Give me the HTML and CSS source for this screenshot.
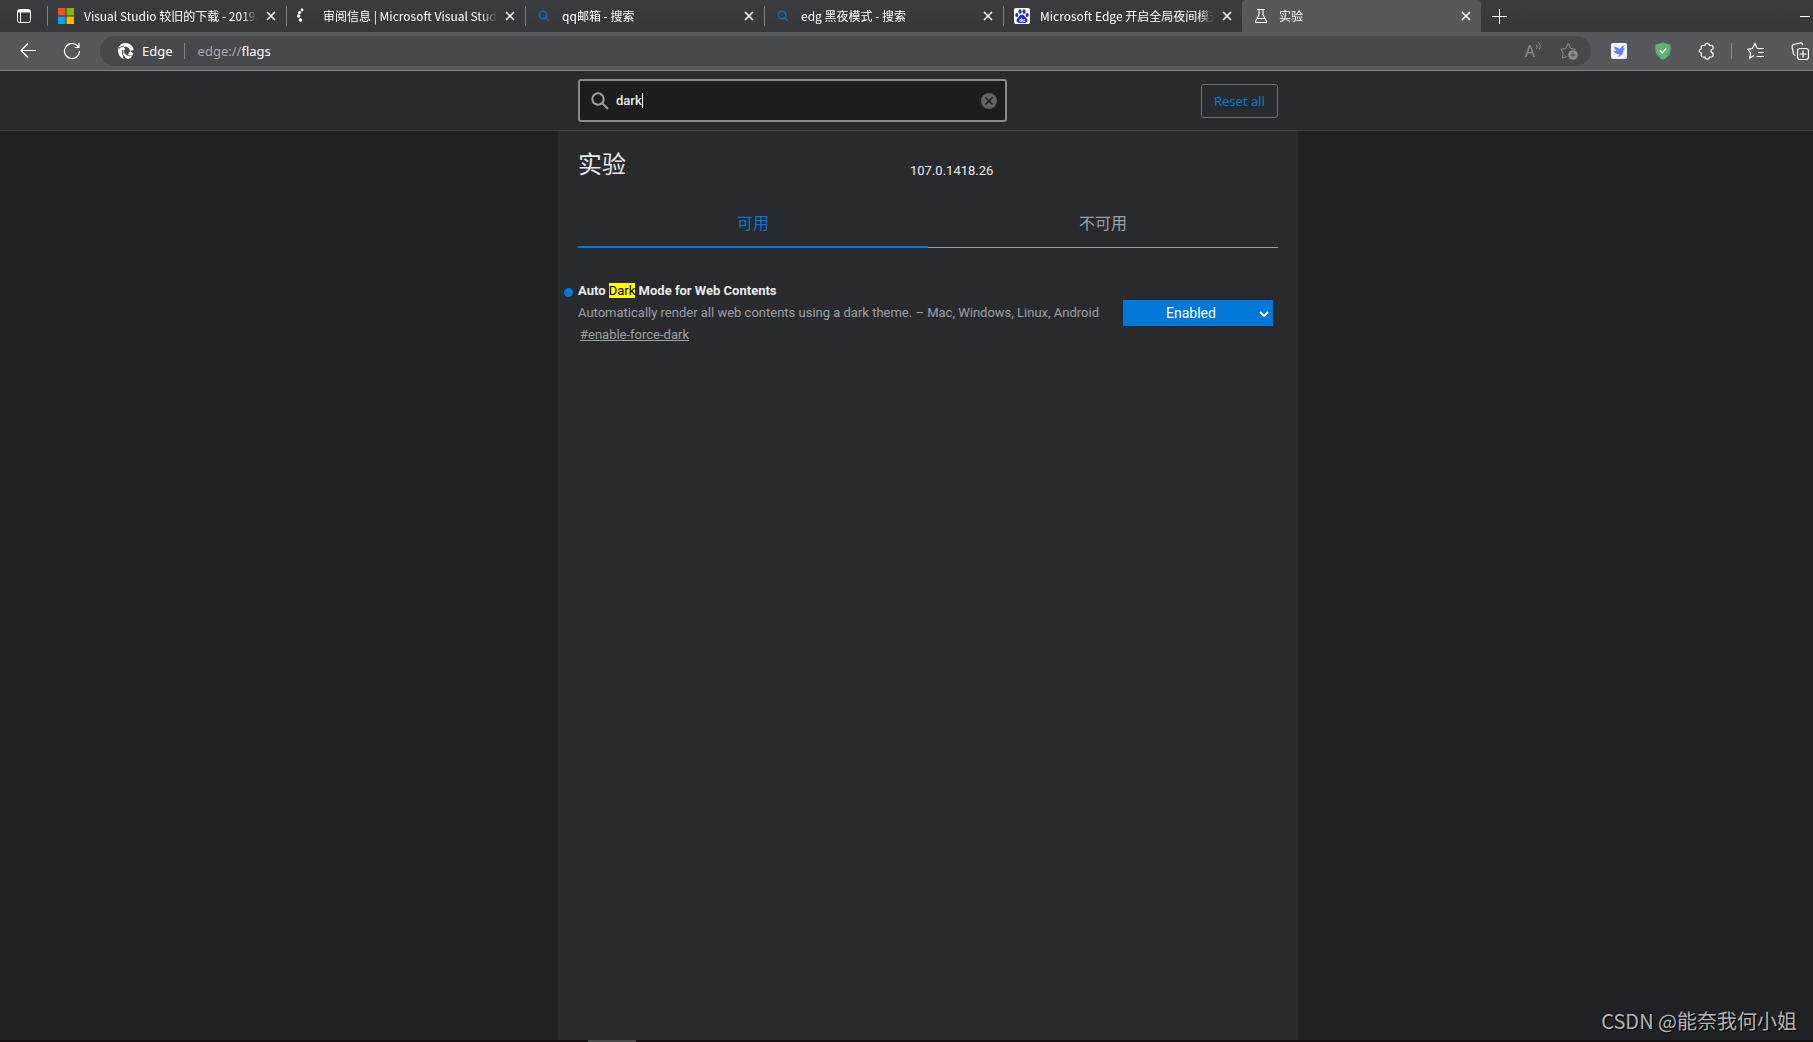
FILE: index.html
```html
<!DOCTYPE html>
<html lang="zh-CN">
<head>
<meta charset="utf-8">
<title>实验</title>
<link rel="stylesheet" href="styles.css">
</head>
<body>
<header class="browser">
  <nav class="tabstrip" aria-label="Tabs">
    <button class="tab-actions" aria-label="Tab actions">
      <svg width="14" height="14" viewBox="0 0 14 14" fill="none" stroke="#fff"><rect x=".5" y=".5" width="13" height="13" rx="2"/><path d="M1 1h12v2.500H1z" fill="#fff" stroke="none"/><path d="M3.500 3v10"/></svg>
    </button>
    <div class="tab">
      <svg class="favicon" width="16" height="16" viewBox="0 0 16 16"><path fill="#f25022" d="M0 0h7.500v7.500H0z"/><path fill="#7fba00" d="M8.500 0H16v7.500H8.500z"/><path fill="#00a4ef" d="M0 8.500h7.500V16H0z"/><path fill="#ffb900" d="M8.500 8.500H16V16H8.500z"/></svg>
      <a class="tab-title" href="#">Visual Studio 较旧的下载 - 2019、</a>
      <button class="close" aria-label="Close tab"><svg width="10" height="10" viewBox="0 0 10 10"><path d="M1 1l8 8M9 1l-8 8"/></svg></button>
    </div>
    <div class="tab">
      <svg class="favicon" width="16" height="16" viewBox="0 0 16 16" fill="#fff"><circle cx="5" cy="2" r="1.400"/><circle cx="2.500" cy="4.500" r="1.600"/><circle cx="1.700" cy="8" r="1.700"/><circle cx="3.500" cy="12" r="1.800"/></svg>
      <a class="tab-title" href="#">审阅信息 | Microsoft Visual Studio</a>
      <button class="close" aria-label="Close tab"><svg width="10" height="10" viewBox="0 0 10 10"><path d="M1 1l8 8M9 1l-8 8"/></svg></button>
    </div>
    <div class="tab">
      <svg class="favicon" width="16" height="16" viewBox="0 0 16 16" fill="none" stroke="#0f6cbd" stroke-width="1.600"><circle cx="7" cy="7" r="3.700"/><path d="M9.800 9.800L13 13"/></svg>
      <a class="tab-title" href="#">qq邮箱 - 搜索</a>
      <button class="close" aria-label="Close tab"><svg width="10" height="10" viewBox="0 0 10 10"><path d="M1 1l8 8M9 1l-8 8"/></svg></button>
    </div>
    <div class="tab">
      <svg class="favicon" width="16" height="16" viewBox="0 0 16 16" fill="none" stroke="#0f6cbd" stroke-width="1.600"><circle cx="7" cy="7" r="3.700"/><path d="M9.800 9.800L13 13"/></svg>
      <a class="tab-title" href="#">edg 黑夜模式 - 搜索</a>
      <button class="close" aria-label="Close tab"><svg width="10" height="10" viewBox="0 0 10 10"><path d="M1 1l8 8M9 1l-8 8"/></svg></button>
    </div>
    <div class="tab">
      <svg class="favicon" width="16" height="16" viewBox="0 0 16 16"><rect width="16" height="16" rx="2" fill="#fff"/><g fill="#2529d8"><ellipse cx="2.800" cy="7" rx="1.600" ry="2.100"/><ellipse cx="6" cy="3.500" rx="1.600" ry="2.200"/><ellipse cx="10" cy="3.500" rx="1.600" ry="2.200"/><ellipse cx="13.200" cy="7" rx="1.600" ry="2.100"/><path d="M8 6.500c2.200 0 2.600 2.300 4.400 3.700 2 1.700.9 4.800-1.600 4.800H5.200c-2.500 0-3.600-3.100-1.600-4.800C5.400 8.800 5.800 6.500 8 6.500z"/></g><text x="8" y="13.500" font-family="Roboto, sans-serif" font-size="5" font-weight="700" text-anchor="middle" fill="#fff">du</text></svg>
      <a class="tab-title" href="#">Microsoft Edge 开启全局夜间模式</a>
      <button class="close" aria-label="Close tab"><svg width="10" height="10" viewBox="0 0 10 10"><path d="M1 1l8 8M9 1l-8 8"/></svg></button>
    </div>
    <div class="tab active">
      <svg class="favicon" width="16" height="16" viewBox="0 0 16 16" fill="none" stroke="#fff" stroke-width="1.100"><path d="M4 1.500h8M6 1.500v5L2.600 13.300q-.5 1.200.8 1.200h9.200q1.300 0 .8-1.200L10 6.500v-5M4.300 10.500h7.400"/></svg>
      <a class="tab-title" href="#" aria-current="page">实验</a>
      <button class="close" aria-label="Close tab"><svg width="10" height="10" viewBox="0 0 10 10"><path d="M1 1l8 8M9 1l-8 8"/></svg></button>
    </div>
    <button class="new-tab" aria-label="New tab"><svg width="15" height="15" viewBox="0 0 15 15" stroke="#fff"><path d="M7.500 0v15M0 7.500h15"/></svg></button>
    <button class="minimize" aria-label="Minimize"><svg width="10" height="10" viewBox="0 0 10 10" stroke="#fff"><path d="M0 5.500h10"/></svg></button>
  </nav>
  <div class="toolbar">
    <button class="tool" aria-label="Back"><svg width="18" height="18" viewBox="0 0 18 18"><path d="M17 8.500H2M9 1.500l-7 7 7 7"/></svg></button>
    <button class="tool" aria-label="Refresh"><svg width="18" height="18" viewBox="0 0 18 18"><path d="M16.500 9a7.500 7.500 0 1 1-2.400-5.500L16 5.500M16 1v4.500h-4.500"/></svg></button>
    <div class="address">
      <svg width="18" height="18" viewBox="0 0 18 18"><g fill="none" stroke="#fff" stroke-width="3.800"><path d="M3.500 6A6 6 0 0 1 14.700 8.500"/><path d="M15 10.500a3 3 0 0 1-3.300 1"/><path d="M7 5.500a6 6 0 0 0-.5 9"/></g><path fill="#fff" d="M1.200 5.500Q.2 9.500 2 13q2 3.300 5.500 4.200Q3.500 14 3.800 10q.2-2 1.700-3.500z"/><path fill="#fff" d="M7.500 9.500q.3 4 4.500 4.600 2 .2 4-1-1.800 3.300-5 3.900-3-.5-4-3.500z"/><path d="M1.500 7Q3.500 4 7 4.200M5.800 8Q4 12 8 16" fill="none" stroke="#47484b"/></svg>
      <span class="brand">Edge</span>
      <a class="url" href="#"><span class="scheme">edge://</span>flags</a>
      <button class="read" aria-label="Read aloud">A<svg width="7" height="10" viewBox="0 0 7 10"><path d="M1 3.500q2 2 .5 4.500M3 1q4 3.500 1 7.500"/></svg></button>
      <button class="favorite" aria-label="Add to favorites"><svg width="18" height="18" viewBox="0 0 18 18"><path d="M6.500 14.500l-4 1.500.6-5L.8 7.300l4.900-.8L8.300 1.200l2.500 5.300 5 .8"/><circle cx="13" cy="13" r="4.800" class="plus-disc"/><path d="M13 10.500v5M10.500 13h5" class="plus-mark"/></svg></button>
    </div>
    <button class="tool" aria-label="Bird extension"><svg width="16" height="16" viewBox="0 0 16 16"><defs><linearGradient id="wing" x1="0" y1="0" x2="1" y2="1"><stop offset="0" stop-color="#28a8f5"/><stop offset="1" stop-color="#9a5cf6"/></linearGradient></defs><rect width="16" height="16" rx="2" fill="#f3f1ff" stroke="none"/><path d="M3 3.500q3 .2 5.500 2.500Q10 3 13.800 2q-1.600 1.700-1.500 3.300l2 .8-1.800.8q.3 4.300-5.500 7.300l1.600-2.800Q4.300 11 2.500 7.800l2.700.3Q3.300 6 3 3.500z" fill="url(#wing)" stroke="none"/></svg></button>
    <button class="tool" aria-label="Shield extension"><svg width="16" height="18" viewBox="0 0 16 18"><path d="M8 .5l7.700 2.300V7c0 5-3.200 8.500-7.700 10.800C3.500 15.500.3 12 .3 7V2.800z" fill="#5db46e" stroke="none"/><path d="M4.800 8.300l2.500 2.600 4-4.600" stroke-width="1.500"/></svg></button>
    <button class="tool" aria-label="Extensions"><svg width="18" height="18" viewBox="0 0 18 18"><path d="M4.500 3.500H7a2.200 2.200 0 0 1 4.400 0h2.400q1.200 0 1.200 1.200V7a2 2 0 0 0 0 4v2.800q0 1.200-1.200 1.200h-2.400a2.200 2.200 0 0 1-4.400 0H4.500q-1.200 0-1.200-1.200V11a2 2 0 0 1 0-4V4.700q0-1.200 1.200-1.200z"/></svg></button>
    <span class="divider"></span>
    <button class="tool" aria-label="Favorites"><svg width="18" height="18" viewBox="0 0 18 18"><path d="M7 13.500L2.700 16l.9-5.200L.8 7.300l4.700-.8L8 1.500l2.300 5H17M11 10.500h6M9.500 14.500H17"/></svg></button>
    <button class="tool" aria-label="Collections"><svg width="18" height="18" viewBox="0 0 18 18"><rect x="6.500" y="6.500" width="11" height="11" rx="2.500"/><path d="M12 8.500v7M8.500 12h7M4.500 13.500Q2.800 13 2.500 11.500L1 5Q.8 3 2.800 2.500L9 1q2.200-.3 2.800 2"/></svg></button>
  </div>
</header>

<main class="page">
  <div class="page-top">
    <div class="top-inner">
      <div class="search">
        <svg class="search-icon" width="18" height="18" viewBox="0 0 18 18" fill="none" stroke="#9aa0a6" stroke-width="2"><circle cx="7" cy="7" r="5.700"/><path d="M11 11l6 6"/></svg>
        <input type="text" value="dark" aria-label="搜索标志">
        <span class="caret"></span>
        <button class="clear" aria-label="Clear search"><svg width="16" height="16" viewBox="0 0 16 16"><circle cx="8" cy="8" r="8" fill="#5f6368"/><path d="M4.500 4.500l7 7M11.500 4.500l-7 7" stroke="#1d1d1f" stroke-width="1.600"/></svg></button>
      </div>
      <button class="reset">Reset all</button>
    </div>
  </div>
  <section class="panel">
    <div class="heading">
      <h1>实验</h1>
      <span class="version">107.0.1418.26</span>
    </div>
    <div class="views" role="tablist">
      <button class="view selected" role="tab" aria-selected="true">可用</button>
      <button class="view" role="tab" aria-selected="false">不可用</button>
    </div>
    <article class="flag">
      <div class="flag-text">
        <h2><label for="force-dark">Auto <mark>Dark</mark> Mode for Web Contents</label></h2>
        <p>Automatically render all web contents using a dark theme. – Mac, Windows, Linux, Android</p>
        <a class="permalink" href="#enable-force-dark">#enable-force-dark</a>
      </div>
      <div class="choice">
        <select id="force-dark"><option>Enabled</option><option>Default</option><option>Disabled</option></select>
        <svg width="10" height="6" viewBox="0 0 10 6" fill="none" stroke="#fff" stroke-width="2"><path d="M1 1l4 4 4-4"/></svg>
      </div>
    </article>
  </section>
  <div class="watermark">CSDN @能奈我何小姐</div>
</main>
<footer class="taskbar"><span></span></footer>
</body>
</html>
```
FILE: styles.css
```css
* {
  box-sizing: border-box;
}

body {
  margin: 0;
  min-height: 100vh;
  display: flex;
  flex-direction: column;
  overflow-x: hidden;
  background: #202124;
  color: #e8eaed;
  font-family: Roboto, "Noto Sans CJK SC", sans-serif;
  font-size: 13px;
}

button {
  display: flex;
  align-items: center;
  justify-content: center;
  flex: none;
  padding: 0;
  border: 0;
  background: none;
  color: inherit;
  font: inherit;
}

a {
  color: inherit;
  text-decoration: none;
}

svg {
  flex: none;
}

/* Browser frame */
.browser {
  font-family: "Noto Sans CJK SC", sans-serif;
  color: #fff;
}

.tabstrip {
  display: flex;
  height: 32px;
  background: linear-gradient(#3b3c3f, #363739);
}

.tab-actions {
  width: 47px;
}

.tab {
  display: flex;
  align-items: center;
  flex: 0 1 239px;
  min-width: 0;
  padding: 0 10px 0 11px;
  background: linear-gradient(#808184, #808184) 0 6px / 1px 20px no-repeat;
  font-size: 12px;
}

.tab.active {
  background: #57585c;
  border-radius: 4px 4px 0 0;
}

.favicon {
  margin-right: 10px;
}

.tab-title {
  flex: 1;
  min-width: 0;
  margin-right: 8px;
  overflow: hidden;
  white-space: nowrap;
  line-height: 20px;
  mask-image: linear-gradient(to right, #000 calc(100% - 16px), transparent);
}

.close svg {
  stroke: #fff;
  stroke-width: 1.5;
}

.new-tab {
  width: 36px;
}

.minimize {
  margin-left: auto;
  margin-right: 3px;
}

.toolbar {
  display: flex;
  align-items: center;
  height: 39px;
  padding: 0 0 0 6px;
  background: #57585c;
  border-bottom: 1px solid #85868a;
}

.tool {
  width: 44px;
}

.tool svg {
  fill: none;
  stroke: #fff;
  stroke-width: 1.2;
}

.tool:last-child {
  margin-right: -9px;
}

.address {
  display: flex;
  align-items: center;
  flex: 1;
  height: 30px;
  margin: 0 6px;
  padding: 0 13px 0 17px;
  border-radius: 15px;
  background: #47484b;
  font-family: "Noto Sans", sans-serif;
  font-size: 13px;
  line-height: 20px;
}

.brand {
  margin-left: 7px;
  padding-right: 11px;
}

.url {
  flex: 1;
  padding-left: 14px;
  background: linear-gradient(#7f8083, #7f8083) 0 2px / 1px 16px no-repeat;
}

.scheme {
  color: #a9aaac;
}

.read {
  align-items: flex-start;
  color: #8c8d90;
  font-size: 16px;
  margin-right: 18px;
}

.read svg,
.favorite svg {
  fill: none;
  stroke: #8c8d90;
}

.favorite .plus-disc {
  fill: #8c8d90;
  stroke: none;
}

.favorite .plus-mark {
  stroke: #47484b;
}

.divider {
  width: 1px;
  height: 16px;
  margin: 0 2px;
  background: #85868a;
}

/* Flags page */
.page {
  position: relative;
  display: flex;
  flex-direction: column;
  flex: 1;
}

.page-top {
  padding: 8px 20px 8px 63px;
  background: #292a2d;
  border-bottom: 1px solid #3f4043;
}

.top-inner {
  display: flex;
  align-items: center;
  justify-content: space-between;
  max-width: 700px;
  margin: 0 auto;
}

.search {
  position: relative;
  display: flex;
  align-items: center;
  width: 429px;
  height: 43px;
  padding: 0 8px 0 11px;
  border: 2px solid #8a8a8a;
  border-radius: 3px;
  background: #1d1d1f;
}

.search input {
  flex: 1;
  min-width: 0;
  height: 36px;
  padding: 0 0 0 7px;
  border: 0;
  outline: 0;
  background: none;
  color: #e8eaed;
  font: 500 13px Roboto, sans-serif;
}

.caret {
  position: absolute;
  left: 62px;
  top: 12px;
  width: 1px;
  height: 15px;
  background: #fff;
}

.reset {
  height: 34px;
  padding: 0 12px;
  border: 1px solid #707174;
  border-radius: 3px;
  color: #0078d7;
  font: 13px "Noto Sans", sans-serif;
}

.panel {
  flex: 1;
  width: 740px;
  max-width: 100%;
  align-self: center;
  margin-left: 43px;
  padding: 16px 20px;
  background: #292a2d;
}

.heading {
  display: grid;
  grid-template-columns: 332px 1fr;
  align-items: end;
  height: 36px;
}

h1 {
  margin: 0;
  font-size: 24px;
  font-weight: 400;
  line-height: 36px;
}

.version {
  line-height: 24px;
}

.views {
  display: grid;
  grid-template-columns: 1fr 1fr;
  margin-top: 20px;
}

.view {
  height: 45px;
  padding-bottom: 6px;
  border-bottom: 1px solid #9aa0a6;
  color: #9aa0a6;
  font: 16px "Noto Sans CJK SC", sans-serif;
}

.view.selected {
  border-bottom: 2px solid #0078d7;
  color: #0078d7;
}

.flag {
  display: flex;
  align-items: center;
  justify-content: space-between;
  margin-top: 32px;
  padding-right: 5px;
}

.flag-text {
  color: #9aa0a6;
  line-height: 22px;
}

h2 {
  position: relative;
  margin: 0;
  color: #e8eaed;
  font-size: 13px;
  font-weight: 700;
}

h2::before {
  content: "";
  position: absolute;
  left: -14px;
  top: 8px;
  width: 9px;
  height: 9px;
  border-radius: 50%;
  background: #0078d7;
}

mark {
  background: #ff0;
  color: #000;
  font-weight: 400;
}

.flag p {
  margin: 0;
}

.permalink {
  margin-left: 2px;
  text-decoration: underline;
}

.choice {
  position: relative;
}

.choice select {
  appearance: none;
  display: block;
  width: 150px;
  height: 26px;
  padding: 0 14px 0 0;
  border: 0;
  border-radius: 0;
  background: #0078d7;
  color: #fff;
  font: 14px Roboto, sans-serif;
  text-align-last: center;
}

.choice svg {
  position: absolute;
  right: 4px;
  top: 11px;
  pointer-events: none;
}

.watermark {
  position: absolute;
  right: 16px;
  bottom: 5px;
  color: #b4b5b6;
  font: 20px "Noto Sans CJK SC", sans-serif;
  line-height: 28px;
  text-shadow: 1px 1px 1px #000;
}

.taskbar {
  display: flex;
  height: 2px;
  padding-left: 588px;
  background: #150f12;
}

.taskbar span {
  width: 48px;
  background: #4a484a;
}
```
